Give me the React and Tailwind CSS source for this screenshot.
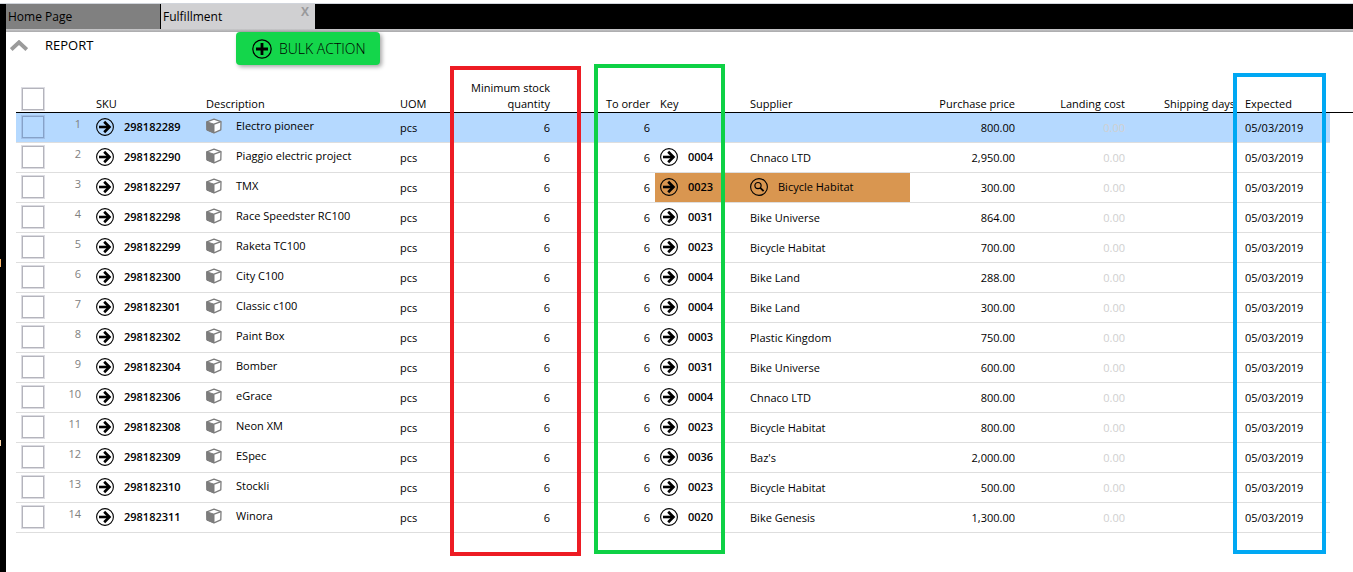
import React, { useState } from 'react';
import clsx from 'clsx';

// -------------------------
// Data
// -------------------------
const ROWS = [
  { sku: '298182289', name: 'Electro pioneer', key: '', supplier: '', price: '800.00' },
  { sku: '298182290', name: 'Piaggio electric project', key: '0004', supplier: 'Chnaco LTD', price: '2,950.00' },
  { sku: '298182297', name: 'TMX', key: '0023', supplier: 'Bicycle Habitat', price: '300.00', editing: true },
  { sku: '298182298', name: 'Race Speedster RC100', key: '0031', supplier: 'Bike Universe', price: '864.00' },
  { sku: '298182299', name: 'Raketa TC100', key: '0023', supplier: 'Bicycle Habitat', price: '700.00' },
  { sku: '298182300', name: 'City C100', key: '0004', supplier: 'Bike Land', price: '288.00' },
  { sku: '298182301', name: 'Classic c100', key: '0004', supplier: 'Bike Land', price: '300.00' },
  { sku: '298182302', name: 'Paint Box', key: '0003', supplier: 'Plastic Kingdom', price: '750.00' },
  { sku: '298182304', name: 'Bomber', key: '0031', supplier: 'Bike Universe', price: '600.00' },
  { sku: '298182306', name: 'eGrace', key: '0004', supplier: 'Chnaco LTD', price: '800.00' },
  { sku: '298182308', name: 'Neon XM', key: '0023', supplier: 'Bicycle Habitat', price: '800.00' },
  { sku: '298182309', name: 'ESpec', key: '0036', supplier: "Baz's", price: '2,000.00' },
  { sku: '298182310', name: 'Stockli', key: '0023', supplier: 'Bicycle Habitat', price: '500.00' },
  { sku: '298182311', name: 'Winora', key: '0020', supplier: 'Bike Genesis', price: '1,300.00' },
];

// -------------------------
// Main App Component
// -------------------------
export default function App() {
  const [open, setOpen] = useState(true);

  return (
    <div className="flex min-h-screen flex-col bg-white font-['Open_Sans','Noto_Sans',sans-serif] text-black">
      <div className="h-1 border-b border-gray-300 bg-white" />
      <TabBar />
      <div className="relative flex-1 border-l-6 border-black bg-white">
        <span className="absolute -left-1.5 top-[230px] h-2 w-px bg-orange-300" />
        <span className="absolute -left-1.5 top-[411px] h-1.5 w-px bg-orange-200" />
        <div className="h-[3px] bg-linear-to-b from-[#c9c9cb] to-[#a9a9ab]" />
        <header className="flex h-12 items-start">
          <button
            type="button"
            aria-label="Toggle report"
            onClick={() => setOpen(!open)}
            className="mt-2 ml-1 flex w-[35px]"
          >
            <ChevronIcon />
          </button>
          <h1 className="mt-[3px] w-[191px] text-[13px] leading-5 font-medium">REPORT</h1>
          <button
            type="button"
            className="flex h-[33px] items-center gap-[7px] rounded bg-[#14d64b] pr-3.5 pl-4 text-[14px] font-light shadow-[2px_2px_4px_rgba(0,0,0,0.35)]"
          >
            <PlusCircleIcon />
            BULK ACTION
          </button>
        </header>
        {open && <ReportTable />}
      </div>
    </div>
  );
}

// -------------------------
// Components
// -------------------------
const TabBar = () => (
  <nav className="flex h-[25px] bg-black pl-1.5 text-[12px] leading-[25px]">
    <button type="button" className="w-[154px] bg-[#808080] pl-0.5 text-left">
      Home Page
    </button>
    <div className="ml-px flex w-[154px] items-start justify-between bg-[#d0d0d2] pr-1.5 pl-0.5">
      <button type="button" className="font-medium">Fulfillment</button>
      <button type="button" aria-label="Close tab" className="text-[12px] leading-4 font-bold text-[#9a9a9c]">
        X
      </button>
    </div>
  </nav>
);

const ReportTable = () => {
  const [checked, setChecked] = useState([]);

  const toggle = (sku) =>
    setChecked((prev) => (prev.includes(sku) ? prev.filter((s) => s !== sku) : [...prev, sku]));

  return (
    <div className="relative ml-2.5">
      <table className="w-full table-fixed border-separate border-spacing-0 text-[11px] leading-4">
        <colgroup>
          <col className="w-[35px]" />
          <col className="w-10" />
          <col className="w-[110px]" />
          <col className="w-[194px]" />
          <col className="w-[60px]" />
          <col className="w-[100px]" />
          <col className="w-[100px]" />
          <col className="w-[90px]" />
          <col className="w-[165px]" />
          <col className="w-[110px]" />
          <col className="w-[110px]" />
          <col className="w-[110px]" />
          <col className="w-[90px]" />
          <col />
        </colgroup>
        <thead>
          <tr className="text-left *:h-[33px] *:border-b *:border-black *:px-[5px] *:align-bottom *:font-medium">
            <th className="pb-px">
              <Checkbox
                label="Select all"
                checked={checked.length === ROWS.length}
                onChange={() => setChecked(checked.length === ROWS.length ? [] : ROWS.map((r) => r.sku))}
              />
            </th>
            <th />
            <th>SKU</th>
            <th>Description</th>
            <th>UOM</th>
            <th className="text-right">Minimum stock quantity</th>
            <th className="text-right">To order</th>
            <th>Key</th>
            <th>Supplier</th>
            <th className="text-right">Purchase price</th>
            <th className="text-right">Landing cost</th>
            <th className="text-right">Shipping days</th>
            <th>Expected</th>
            <th />
          </tr>
        </thead>
        <tbody>
          {ROWS.map((row, i) => (
            <Row
              key={row.sku}
              row={row}
              index={i + 1}
              active={i === 0}
              checked={checked.includes(row.sku)}
              onToggle={() => toggle(row.sku)}
            />
          ))}
        </tbody>
      </table>

      {/* column highlights */}
      <div className="pointer-events-none absolute -top-3.5 left-[434px] h-[490px] w-[131px] border-4 border-[#ed1c24]" />
      <div className="pointer-events-none absolute -top-4 left-[578px] h-[490px] w-[131px] border-4 border-[#0ed145]" />
      <div className="pointer-events-none absolute -top-[7px] left-[1217px] h-[481px] w-[93px] border-4 border-[#00a8f3]" />
    </div>
  );
};

const Row = ({ row, index, active, checked, onToggle }) => {
  const cell = clsx('h-[30px] border-b border-[#dedede] px-[5px]', active && 'bg-[#b5d9ff]');
  const lookup = clsx(cell, row.editing && 'bg-[#d99650]');

  return (
    <tr>
      <td className={clsx(cell, 'pb-0.5')}>
        <Checkbox label={`Select ${row.sku}`} checked={checked} onChange={onToggle} active={active} />
      </td>
      <td className={clsx(cell, 'pb-2 text-right text-[#808080]')}>
        <span className="pr-[5px]">{index}</span>
      </td>
      <td className={clsx(cell, 'pb-0.5')}>
        <a href="#sku" className="flex items-center gap-2.5 font-semibold">
          <ArrowCircleIcon />
          {row.sku}
        </a>
      </td>
      <td className={clsx(cell, 'pb-1')}>
        <div className="flex items-center gap-3.5">
          <CubeIcon />
          {row.name}
        </div>
      </td>
      <td className={cell}>pcs</td>
      <td className={clsx(cell, 'text-right')}>6</td>
      <td className={clsx(cell, 'text-right')}>6</td>
      <td className={clsx(lookup, 'pb-0.5')}>
        {row.key && (
          <a href="#key" className="flex items-center gap-2.5 font-semibold">
            <ArrowCircleIcon />
            {row.key}
          </a>
        )}
      </td>
      <td className={clsx(lookup, row.editing && 'pb-0.5')}>
        <div className="flex items-center gap-2.5">
          {row.editing && (
            <button type="button" aria-label="Find supplier">
              <SearchCircleIcon />
            </button>
          )}
          {row.supplier}
        </div>
      </td>
      <td className={clsx(cell, 'text-right')}>{row.price}</td>
      <td className={clsx(cell, 'text-right text-[#d0d0d0]')}>0.00</td>
      <td className={cell} />
      <td className={cell}>05/03/2019</td>
      <td />
    </tr>
  );
};

const Checkbox = ({ label, checked, onChange, active }) => (
  <input
    type="checkbox"
    aria-label={label}
    checked={checked}
    onChange={onChange}
    className={clsx(
      'block size-6 appearance-none border checked:bg-gray-400',
      active
        ? 'border-[#a3c1e8] inset-shadow-[0_0_0_1px_#86a2c8]'
        : 'border-[#dcdce2] inset-shadow-[0_0_0_1px_#b4b4bc]'
    )}
  />
);

// -------------------------
// Icons
// -------------------------
const ChevronIcon = () => (
  <svg width="18" height="12" viewBox="0 0 18 12" fill="none">
    <path d="M1.2 9.6 L9 2.4 L16.8 9.6" stroke="#9b9b9b" strokeWidth="4" />
  </svg>
);

const PlusCircleIcon = () => (
  <svg width="20" height="20" viewBox="0 0 20 20" fill="none" stroke="#000">
    <circle cx="10" cy="10" r="9.2" strokeWidth="1.2" />
    <path d="M10 4v12M4 10h12" strokeWidth="2.8" />
  </svg>
);

const ArrowCircleIcon = () => (
  <svg width="18" height="18" viewBox="0 0 18 18" fill="none" stroke="#000">
    <circle cx="9" cy="9" r="8.4" strokeWidth="1.1" />
    <path d="M3 9h10.5" strokeWidth="2.6" />
    <path d="M8.2 3.8 L13.4 9 L8.2 14.2" strokeWidth="2.7" />
  </svg>
);

const SearchCircleIcon = () => (
  <svg width="18" height="18" viewBox="0 0 18 18" fill="none" stroke="#000" className="block">
    <circle cx="9" cy="9" r="8.4" strokeWidth="1.1" />
    <circle cx="8" cy="7.6" r="3.1" strokeWidth="1.2" />
    <path d="M10.3 9.9 L13.6 13.2" strokeWidth="1.8" />
  </svg>
);

const CubeIcon = () => (
  <svg width="16" height="16" viewBox="0 0 16 16" stroke="#7d7d7d" strokeLinejoin="round">
    <path d="M0.8 3.8 L8 1.2 L15 3.6 L14.8 11.8 L8 14.8 L1 12 Z" fill="#fff" strokeWidth="1.3" />
    <path d="M0.8 3.8 L8 6.2 V14.8 L1 12 Z" fill="#7d7d7d" strokeWidth="1" />
    <path d="M8 6.2 L15 3.6" fill="none" strokeWidth="1.3" />
  </svg>
);
